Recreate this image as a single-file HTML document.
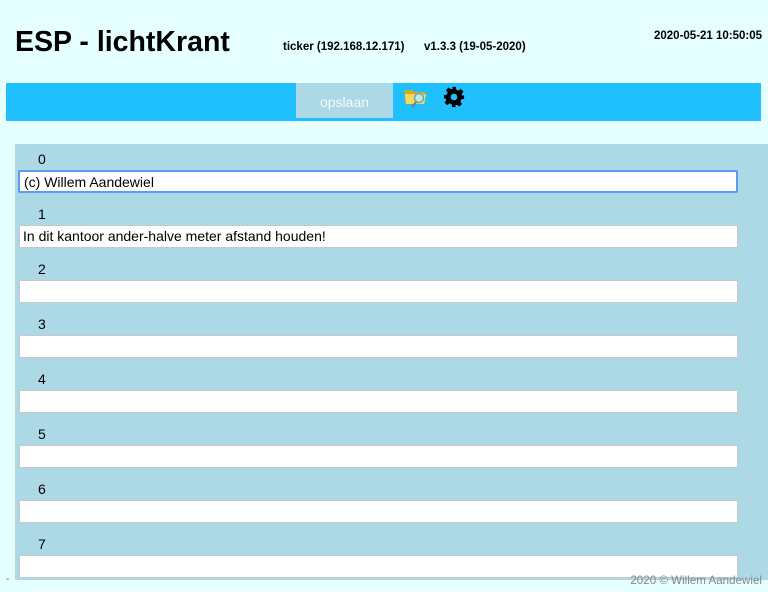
<!DOCTYPE html>
<html><head><meta charset="utf-8"><style>
html,body{margin:0;padding:0;width:768px;height:592px;overflow:hidden;background:#e6ffff;font-family:"Liberation Sans",Arial,sans-serif;position:relative}
.abs{position:absolute}
h1{position:absolute;left:15px;top:26px;margin:0;font-size:28.5px;font-weight:bold;color:#000;line-height:32px}
.small{font-size:11.5px;font-weight:bold;color:#000}
.nav{left:6px;top:83px;width:755px;height:38px;background:#20c0ff}
.btn{left:296px;top:83px;width:97px;height:35px;background:#add8e6;color:#f4fbff;font-size:14px;text-align:center;line-height:38px}
.panel{left:15px;top:144px;width:753px;height:436px;background:#add8e6}
.lbl{position:absolute;left:23px;font-size:14px;color:#000}
.inp{position:absolute;left:4px;width:714px;height:21px;background:#fff;border:1px solid #c8c8c8;font-size:14px;line-height:21px;padding-left:3px;box-sizing:content-box;color:#000}
.focus{border:2px solid #5b9cf0;height:19px;left:3px;width:712px;border-radius:2px;padding-left:4px}
.foot{right:6px;top:574px;font-size:11.6px;color:#888}
</style></head><body>
<h1>ESP - lichtKrant</h1>
<div class="abs small" style="left:283px;top:41px">ticker (192.168.12.171)</div>
<div class="abs small" style="left:424px;top:41px">v1.3.3 (19-05-2020)</div>
<div class="abs small" style="left:654px;top:30px">2020-05-21 10:50:05</div>
<div class="abs nav"></div>
<div class="abs btn">opslaan</div>
<svg class="abs" style="left:404px;top:86px" width="24" height="24" viewBox="0 0 24 24">
<path d="M1 4h7l2 2h11v11H1z" fill="#d9a820"/>
<path d="M1 8h21l-2 10H2z" fill="#f6d95a"/>
<line x1="13" y1="15" x2="8" y2="21" stroke="#777" stroke-width="2"/>
<circle cx="15" cy="12" r="4.5" fill="#bfe8ee" stroke="#6aa" stroke-width="1.5"/>
</svg>
<svg class="abs" style="left:443px;top:86px" width="22" height="22" viewBox="0 0 24 24">
<path fill="#000" d="M10 1h4l.6 3.2 2.2.9 2.7-1.9 2.8 2.8-1.9 2.7.9 2.2L23 10v4l-3.2.6-.9 2.2 1.9 2.7-2.8 2.8-2.7-1.9-2.2.9L14 23h-4l-.6-3.2-2.2-.9-2.7 1.9-2.8-2.8 1.9-2.7-.9-2.2L1 14v-4l3.2-.6.9-2.2-1.9-2.7 2.8-2.8 2.7 1.9 2.2-.9z"/>
<circle cx="12" cy="12" r="3.6" fill="#20c0ff"/>
</svg>
<div class="abs panel">
<div class="lbl" style="top:7px">0</div><div class="inp focus" style="top:26px">(c) Willem Aandewiel</div>
<div class="lbl" style="top:62px">1</div><div class="inp" style="top:81px">In dit kantoor ander-halve meter afstand houden!</div>
<div class="lbl" style="top:117px">2</div><div class="inp" style="top:136px"></div>
<div class="lbl" style="top:172px">3</div><div class="inp" style="top:191px"></div>
<div class="lbl" style="top:227px">4</div><div class="inp" style="top:246px"></div>
<div class="lbl" style="top:282px">5</div><div class="inp" style="top:301px"></div>
<div class="lbl" style="top:337px">6</div><div class="inp" style="top:356px"></div>
<div class="lbl" style="top:392px">7</div><div class="inp" style="top:411px"></div>
</div>
<div class="abs" style="left:6px;top:574px;font-size:10px;color:#666">-</div>
<div class="abs foot">2020 © Willem Aandewiel</div>
</body></html>
